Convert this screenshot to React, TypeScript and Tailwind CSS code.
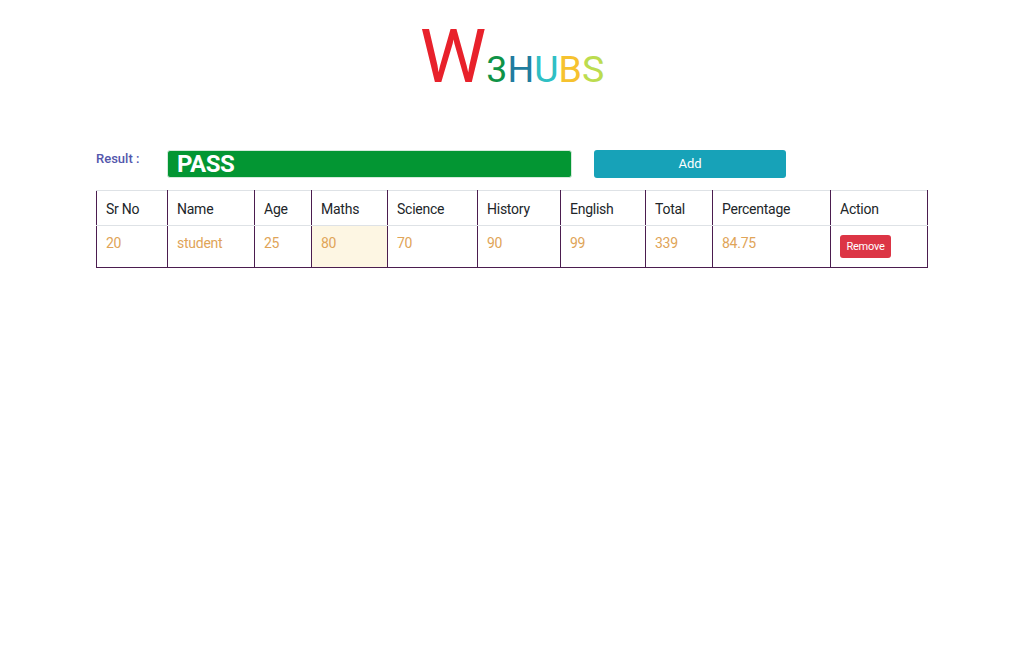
const headers = ['Sr No', 'Name', 'Age', 'Maths', 'Science', 'History', 'English', 'Total', 'Percentage', 'Action']
const values = ['20', 'student', '25', '80', '70', '90', '99', '339', '84.75']
const widths = ['w-[71px]', 'w-[87px]', 'w-[57px]', 'w-[76px]', 'w-[90px]', 'w-[83px]', 'w-[85px]', 'w-[67px]', 'w-[118px]', 'w-[97px]']

export default function App() {
  return (
    <div className="min-h-[657px] bg-white font-['Roboto',sans-serif] px-[96px]">
      <div className="flex justify-center items-baseline h-[150px] pt-[12px]">
        <span className="text-[75px] leading-[88px] text-[#e8212b]">W</span>
        <span className="text-[37.5px] leading-[88px]">
          <span className="text-[#0f9347]">3</span>
          <span className="text-[#217c9e]">H</span>
          <span className="text-[#2fbfc4]">U</span>
          <span className="text-[#f6c22f]">B</span>
          <span className="text-[#bcdc4f]">S</span>
        </span>
      </div>

      <div className="flex items-start h-[40px]">
        <div className="w-[71px] text-[13px] leading-[17px] font-medium text-[#5457ac]">Result :</div>
        <div className="w-[405px] h-[28px] rounded-[3px] bg-[#039633] border border-[#d5eadb] pl-[9px] text-[24px] leading-[26px] font-bold text-white tracking-[-0.5px]">
          PASS
        </div>
        <button className="ml-[22px] w-[192px] h-[28px] rounded-[3px] bg-[#17a2b8] text-[13px] text-white">
          Add
        </button>
      </div>

      <table className="table-fixed border-collapse w-[831px] text-[14px] tracking-[-0.25px]">
        <thead>
          <tr className="h-[35px]">
            {headers.map((h, i) => (
              <th key={h} className={`${widths[i]} border-x border-x-[#4b1d4f] border-y border-y-[#dee2e6] px-[9px] pt-[2px] text-left font-normal text-[#212529]`}>
                {h}
              </th>
            ))}
          </tr>
        </thead>
        <tbody>
          <tr className="h-[42px]">
            {values.map((v, i) => (
              <td key={i} className={`border border-x-[#4b1d4f] border-t-[#dee2e6] border-b-[#4b1d4f] px-[9px] pb-[6px] text-[#e0a458] ${i === 3 ? 'bg-[#fdf6e3]' : ''}`}>
                {v}
              </td>
            ))}
            <td className="border border-x-[#4b1d4f] border-t-[#dee2e6] border-b-[#4b1d4f] px-[9px]">
              <button className="w-[51px] h-[23px] rounded-[3px] bg-[#dc3545] text-[11px] text-white">Remove</button>
            </td>
          </tr>
        </tbody>
      </table>
    </div>
  )
}
